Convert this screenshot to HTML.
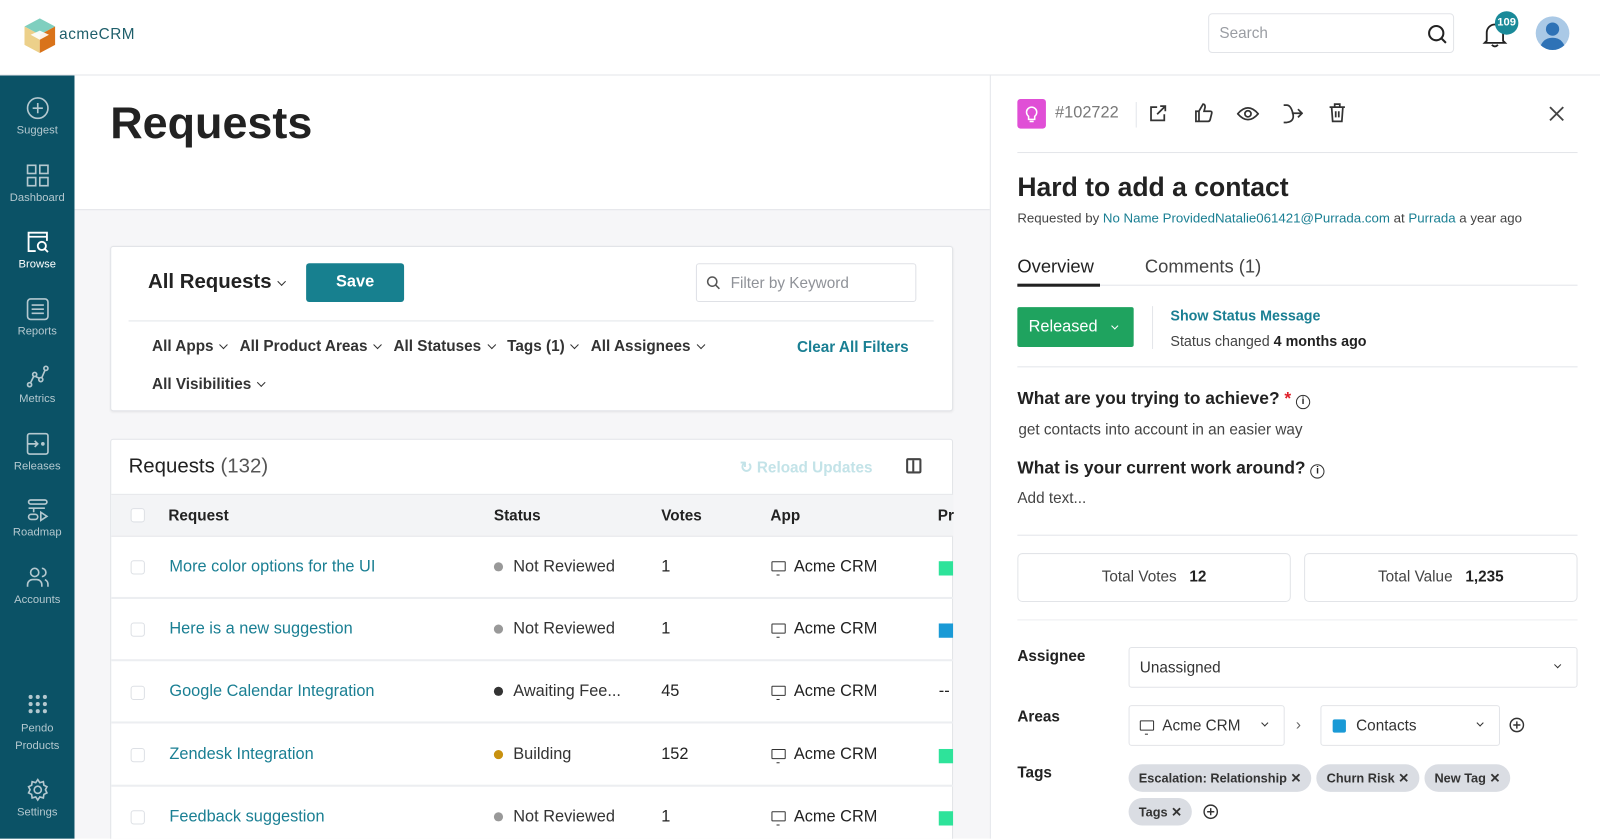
<!DOCTYPE html>
<html><head><meta charset="utf-8"><style>
*{box-sizing:border-box;margin:0;padding:0}
html,body{width:1600px;height:839px;overflow:hidden}
body{font-family:"Liberation Sans",sans-serif;color:#222;background:#fff;position:relative}
#w{position:absolute;left:0;top:0;width:1568px;height:822px;overflow:hidden;transform:scale(1.02041);transform-origin:0 0}
.a{position:absolute}
.side{left:0;top:74px;width:73px;height:748px;background:#0b5266}
.nav{position:absolute;left:0;width:73px;text-align:center;color:#b4c8cf;font-size:11px}
.nav svg{display:block;margin:0 auto 4px}
.link{color:#1a7f93}
.chev{display:inline-block;width:6px;height:6px;border-right:1.5px solid #333;border-bottom:1.5px solid #333;transform:rotate(45deg);margin-left:7px;position:relative;top:-3px}
.cb{position:absolute;left:128px;width:14px;height:14px;border:1.5px solid #dde0e5;border-radius:3px;background:#fff}
.row{position:absolute;left:109px;width:825px;height:61px;border-bottom:2px solid #eceef1;font-size:16px}
.row span{position:absolute;top:21px}
.dot{display:inline-block;width:9px;height:9px;border-radius:50%;margin-right:10px}
.tag{display:inline-block;background:#dadde3;border-radius:14px;padding:6px 10px;font-size:12.5px;font-weight:bold;color:#333;margin-right:5px}
.mon{display:inline-block;width:14px;height:10px;border:1.5px solid #333;border-radius:1px;margin-right:8px;position:relative;top:0}
.mon:after{content:"";position:absolute;left:4px;top:9px;width:3px;height:3px;border-bottom:1.5px solid #333}
</style></head><body><div id="w">
<div class="a" style="left:0;top:0;width:1568px;height:74px;border-bottom:1px solid #e3e5ea"></div>
<svg class="a" style="left:22px;top:17px" width="34" height="36" viewBox="0 0 34 36"><polygon points="17,1 32,9 17,17 2,9" fill="#7fcfbf"/><polygon points="2,9 17,17 17,35 2,27" fill="#ecd08a"/><polygon points="17,17 32,9 32,27 17,35" fill="#d9731a"/><polygon points="17,13 26,17 17,22 8,17" fill="#fff" opacity=".9"/></svg>
<div class="a" style="left:58px;top:25px;font-size:15px;color:#1f5f6b;letter-spacing:.5px">acmeCRM</div>
<div class="a" style="left:1184px;top:13px;width:241px;height:39px;border:1.5px solid #e2e4e8;border-radius:4px;font-size:15px;color:#9a9da3;padding:10px 0 0 10px">Search</div>
<svg class="a" style="left:1398px;top:23px" width="22" height="22" viewBox="0 0 22 22"><circle cx="9.5" cy="9.5" r="7" fill="none" stroke="#222" stroke-width="2"/><path d="M14.5 14.5L19 19" stroke="#222" stroke-width="2"/></svg>
<svg class="a" style="left:1452px;top:20px" width="26" height="28" viewBox="0 0 26 28"><path d="M5 20V12a8 8 0 0 1 16 0v8l2 2H3z" fill="none" stroke="#222" stroke-width="1.8"/><path d="M10 24q3 3 6 0" stroke="#222" stroke-width="1.8" fill="none"/></svg>
<div class="a" style="left:1465px;top:11px;width:23px;height:23px;border-radius:50%;background:#1a8a99;color:#fff;font-size:11px;font-weight:bold;text-align:center;line-height:23px">109</div>
<div class="a" style="left:1505px;top:16px;width:33px;height:33px;border-radius:50%;background:#aac9e6;overflow:hidden"><div class="a" style="left:10px;top:6px;width:13px;height:13px;border-radius:50%;background:#2e72b6"></div><div class="a" style="left:4px;top:21px;width:25px;height:12px;border-radius:12px 12px 0 0;background:#2e72b6"></div></div>

<div class="a side"></div>
<div class="nav" style="top:94px"><svg width="24" height="24" viewBox="0 0 24 24" fill="none" stroke="#b4c8cf" stroke-width="1.6"><circle cx="12" cy="12" r="10"/><path d="M12 7v10M7 12h10"/></svg>Suggest</div>
<div class="nav" style="top:160px"><svg width="24" height="24" viewBox="0 0 24 24" fill="none" stroke="#b4c8cf" stroke-width="1.6"><rect x="2" y="2" width="8" height="8"/><rect x="14" y="2" width="8" height="8"/><rect x="2" y="14" width="8" height="8"/><rect x="14" y="14" width="8" height="8"/></svg>Dashboard</div>
<div class="nav" style="top:225px;color:#fff"><svg width="24" height="24" viewBox="0 0 24 24" fill="none" stroke="#fff" stroke-width="1.8"><path d="M10 21H3V3h18v8"/><path d="M3 7h18"/><circle cx="16" cy="16" r="4"/><path d="M19 19l3 3"/></svg>Browse</div>
<div class="nav" style="top:291px"><svg width="24" height="24" viewBox="0 0 24 24" fill="none" stroke="#b4c8cf" stroke-width="1.6"><rect x="2" y="2" width="20" height="20" rx="3"/><path d="M6 8h12M6 12h12M6 16h12"/></svg>Reports</div>
<div class="nav" style="top:357px"><svg width="24" height="24" viewBox="0 0 24 24" fill="none" stroke="#b4c8cf" stroke-width="1.6"><circle cx="4" cy="20" r="2"/><circle cx="9" cy="10" r="2"/><circle cx="15" cy="15" r="2"/><circle cx="20" cy="4" r="2"/><path d="M5 18l3-6M10 12l4 2M16 13l3-7"/></svg>Metrics</div>
<div class="nav" style="top:423px"><svg width="24" height="24" viewBox="0 0 24 24" fill="none" stroke="#b4c8cf" stroke-width="1.6"><rect x="2" y="2" width="20" height="20" rx="2"/><path d="M2 12h10M9 9l3 3-3 3"/><circle cx="17" cy="12" r="1" fill="#b4c8cf"/></svg>Releases</div>
<div class="nav" style="top:488px"><svg width="24" height="24" viewBox="0 0 24 24" fill="none" stroke="#b4c8cf" stroke-width="1.6"><rect x="3" y="2" width="18" height="4" rx="2"/><path d="M3 10h16M8 10v4"/><rect x="3" y="16" width="9" height="5" rx="2.5"/><path d="M15 14l6 4-6 4z"/></svg>Roadmap</div>
<div class="nav" style="top:554px"><svg width="24" height="24" viewBox="0 0 24 24" fill="none" stroke="#b4c8cf" stroke-width="1.6"><circle cx="9" cy="7" r="4"/><path d="M2 21v-2a5 5 0 0 1 5-5h4a5 5 0 0 1 5 5v2"/><path d="M16 3a4 4 0 0 1 0 8M19 14a5 5 0 0 1 3 5v2"/></svg>Accounts</div>
<div class="nav" style="top:678px;line-height:17px"><svg width="24" height="24" viewBox="0 0 24 24" fill="#b4c8cf"><circle cx="5" cy="5" r="2"/><circle cx="12" cy="5" r="2"/><circle cx="19" cy="5" r="2"/><circle cx="5" cy="12" r="2"/><circle cx="12" cy="12" r="2"/><circle cx="19" cy="12" r="2"/><circle cx="5" cy="19" r="2"/><circle cx="12" cy="19" r="2"/><circle cx="19" cy="19" r="2"/></svg>Pendo<br>Products</div>
<div class="nav" style="top:762px"><svg width="24" height="24" viewBox="0 0 24 24" fill="none" stroke="#b4c8cf" stroke-width="1.6"><circle cx="12" cy="12" r="3.5"/><path d="M12 2l2 3 3.5-1 .5 3.5 3 1.5-1.5 3 1.5 3-3 1.5-.5 3.5-3.5-1-2 3-2-3-3.5 1-.5-3.5-3-1.5 1.5-3-1.5-3 3-1.5.5-3.5 3.5 1z"/></svg>Settings</div>

<div class="a" style="left:73px;top:205px;width:897px;height:617px;background:#f6f6f8;border-top:1.5px solid #e3e5ea"></div>
<div class="a" style="left:108px;top:96px;font-size:44px;font-weight:bold;color:#222">Requests</div>
<div class="a" style="left:970px;top:74px;width:1px;height:748px;background:#e3e5ea"></div>

<div class="a" style="left:108px;top:241px;width:826px;height:162px;background:#fff;border:1.5px solid #e2e4e8;border-radius:3px;box-shadow:0 1px 2px rgba(0,0,0,.06)"></div>
<div class="a" style="left:145px;top:265px;font-size:20px;font-weight:bold;color:#222">All Requests<span class="chev"></span></div>
<div class="a" style="left:300px;top:258px;width:96px;height:38px;background:#17808f;border-radius:3px;color:#fff;font-size:16px;font-weight:bold;text-align:center;line-height:38px">Save</div>
<div class="a" style="left:682px;top:258px;width:216px;height:38px;border:1.5px solid #dfe1e6;border-radius:3px;font-size:15px;color:#8f9298;padding:10px 0 0 33px">Filter by Keyword</div>
<svg class="a" style="left:692px;top:270px" width="14" height="14" viewBox="0 0 14 14"><circle cx="6" cy="6" r="4.5" fill="none" stroke="#555" stroke-width="1.5"/><path d="M9.5 9.5L13 13" stroke="#555" stroke-width="1.5"/></svg>
<div class="a" style="left:126px;top:314px;width:789px;height:1px;background:#e3e5ea"></div>
<div class="a" style="left:149px;top:331px;font-size:15px;font-weight:bold;color:#333"><span>All Apps<span class="chev"></span></span>&nbsp;&nbsp;&nbsp;<span>All Product Areas<span class="chev"></span></span>&nbsp;&nbsp;&nbsp;<span>All Statuses<span class="chev"></span></span>&nbsp;&nbsp;&nbsp;<span>Tags (1)<span class="chev"></span></span>&nbsp;&nbsp;&nbsp;<span>All Assignees<span class="chev"></span></span></div>
<div class="a link" style="left:781px;top:332px;font-size:15px;font-weight:bold">Clear All Filters</div>
<div class="a" style="left:149px;top:368px;font-size:15px;font-weight:bold;color:#333">All Visibilities<span class="chev"></span></div>

<div class="a" style="left:108px;top:430px;width:826px;height:400px;background:#fff;border:1.5px solid #e2e4e8;border-radius:3px"></div>
<div class="a" style="left:126px;top:446px;font-size:20px;color:#222">Requests <span style="color:#555">(132)</span></div>
<div class="a" style="left:725px;top:449px;font-size:15px;font-weight:bold;color:#c3e3e8">&#x21bb; Reload Updates</div>
<div class="a" style="left:888px;top:449px;width:15px;height:15px;border:2px solid #444;border-radius:2px"><div class="a" style="left:4px;top:0;width:2px;height:11px;background:#444"></div></div>
<div class="a" style="left:109px;top:484px;width:825px;height:42px;background:#f3f4f6;border-top:1.5px solid #e6e8eb;border-bottom:1.5px solid #e6e8eb;font-size:15px;font-weight:bold;color:#222">
<span class="a" style="left:56px;top:12px">Request</span><span class="a" style="left:375px;top:12px">Status</span><span class="a" style="left:539px;top:12px">Votes</span><span class="a" style="left:646px;top:12px">App</span><span class="a" style="left:810px;top:12px">Pr</span></div>
<div class="cb" style="top:498px"></div>

<div class="row" style="top:526px"><span class="link" style="left:57px">More color options for the UI</span><span style="left:375px;color:#333"><i class="dot" style="background:#999"></i>Not Reviewed</span><span style="left:539px">1</span><span style="left:647px"><i class="mon"></i>Acme CRM</span><span style="left:811px;width:14px;height:14px;background:#2ee39a;top:24px"></span></div>
<div class="row" style="top:587px"><span class="link" style="left:57px">Here is a new suggestion</span><span style="left:375px;color:#333"><i class="dot" style="background:#999"></i>Not Reviewed</span><span style="left:539px">1</span><span style="left:647px"><i class="mon"></i>Acme CRM</span><span style="left:811px;width:14px;height:14px;background:#1a9ad6;top:24px"></span></div>
<div class="row" style="top:648px"><span class="link" style="left:57px">Google Calendar Integration</span><span style="left:375px;color:#333"><i class="dot" style="background:#333"></i>Awaiting Fee...</span><span style="left:539px">45</span><span style="left:647px"><i class="mon"></i>Acme CRM</span><span style="left:811px">--</span></div>
<div class="row" style="top:710px"><span class="link" style="left:57px">Zendesk Integration</span><span style="left:375px;color:#333"><i class="dot" style="background:#c8910f"></i>Building</span><span style="left:539px">152</span><span style="left:647px"><i class="mon"></i>Acme CRM</span><span style="left:811px;width:14px;height:14px;background:#2ee39a;top:24px"></span></div>
<div class="row" style="top:771px"><span class="link" style="left:57px">Feedback suggestion</span><span style="left:375px;color:#333"><i class="dot" style="background:#999"></i>Not Reviewed</span><span style="left:539px">1</span><span style="left:647px"><i class="mon"></i>Acme CRM</span><span style="left:811px;width:14px;height:14px;background:#2ee39a;top:24px"></span></div>
<div class="cb" style="top:549px"></div><div class="cb" style="top:610px"></div><div class="cb" style="top:672px"></div><div class="cb" style="top:733px"></div><div class="cb" style="top:794px"></div>

<div class="a" style="left:997px;top:97px;width:28px;height:29px;background:#e04fd6;border-radius:3px"></div>
<svg class="a" style="left:1004px;top:103px" width="14" height="17" viewBox="0 0 14 17" fill="none" stroke="#fff" stroke-width="1.5"><path d="M4 11a5 5 0 1 1 6 0v3H4z"/><path d="M5 16h4"/></svg>
<div class="a" style="left:1034px;top:102px;font-size:16px;color:#777">#102722</div>
<div class="a" style="left:1113px;top:100px;width:1px;height:25px;background:#e3e5ea"></div>
<svg class="a" style="left:1126px;top:102px" width="18" height="18" viewBox="0 0 18 18" fill="none" stroke="#333" stroke-width="1.7"><path d="M8 3H2v13h13v-6"/><path d="M11 2h5v5M16 2l-8 8"/></svg>
<svg class="a" style="left:1170px;top:101px" width="19" height="19" viewBox="0 0 19 19" fill="none" stroke="#333" stroke-width="1.7"><path d="M2 8h3v10H2zM5 8l4-7q2 0 2 3l-1 4h6q2 0 1.5 2l-1.5 6q-.5 2-2 2H5"/></svg>
<svg class="a" style="left:1212px;top:104px" width="22" height="15" viewBox="0 0 22 15" fill="none" stroke="#333" stroke-width="1.7"><path d="M1 7.5Q11-4 21 7.5Q11 19 1 7.5z"/><circle cx="11" cy="7.5" r="3"/></svg>
<svg class="a" style="left:1257px;top:101px" width="20" height="20" viewBox="0 0 20 20" fill="none" stroke="#333" stroke-width="1.7"><path d="M1 2h3q4 0 6 8t-6 9H1"/><path d="M9 10h10M15 6l4 4-4 4"/></svg>
<svg class="a" style="left:1302px;top:101px" width="17" height="19" viewBox="0 0 17 19" fill="none" stroke="#333" stroke-width="1.7"><path d="M1 4h15M6 4V1h5v3M3 4l1 14h9l1-14M7 8v6M10 8v6"/></svg>
<svg class="a" style="left:1518px;top:104px" width="15" height="15" viewBox="0 0 15 15" stroke="#444" stroke-width="1.8"><path d="M1 1l13 13M14 1L1 14"/></svg>
<div class="a" style="left:997px;top:149px;width:549px;height:1px;background:#e3e5ea"></div>
<div class="a" style="left:997px;top:168px;font-size:26px;font-weight:bold;color:#222">Hard to add a contact</div>
<div class="a" style="left:997px;top:206px;font-size:13px;color:#444">Requested by <span class="link">No Name ProvidedNatalie061421@Purrada.com</span> at <span class="link">Purrada</span> a year ago</div>
<div class="a" style="left:997px;top:251px;font-size:18px;color:#222">Overview</div>
<div class="a" style="left:1122px;top:251px;font-size:18px;color:#444">Comments (1)</div>
<div class="a" style="left:997px;top:279px;width:549px;height:1px;background:#e3e5ea"></div>
<div class="a" style="left:997px;top:278px;width:81px;height:3px;background:#222"></div>
<div class="a" style="left:997px;top:301px;width:114px;height:39px;background:#1fa35f;border-radius:2px;color:#fff;font-size:16px;padding:11px 0 0 11px">Released<span class="chev" style="border-color:#fff;margin-left:14px;width:5px;height:5px"></span></div>
<div class="a" style="left:1129px;top:300px;width:1px;height:42px;background:#e3e5ea"></div>
<div class="a link" style="left:1147px;top:301px;font-size:14px;font-weight:bold">Show Status Message</div>
<div class="a" style="left:1147px;top:326px;font-size:14px;color:#444">Status changed <b style="color:#222">4 months ago</b></div>
<div class="a" style="left:997px;top:359px;width:549px;height:1px;background:#e3e5ea"></div>
<div class="a" style="left:997px;top:381px;font-size:17px;font-weight:bold;color:#222">What are you trying to achieve? <span style="color:#e0202a">*</span> <span style="border:1.5px solid #333;border-radius:50%;display:inline-block;width:14px;height:14px;text-align:center;line-height:11px;font-size:10px">i</span></div>
<div class="a" style="left:998px;top:413px;font-size:15px;color:#444">get contacts into account in an easier way</div>
<div class="a" style="left:997px;top:449px;font-size:17px;font-weight:bold;color:#222">What is your current work around? <span style="border:1.5px solid #333;border-radius:50%;display:inline-block;width:14px;height:14px;text-align:center;line-height:11px;font-size:10px">i</span></div>
<div class="a" style="left:997px;top:480px;font-size:15px;color:#444">Add text...</div>
<div class="a" style="left:997px;top:524px;width:549px;height:1px;background:#e3e5ea"></div>
<div class="a" style="left:997px;top:542px;width:268px;height:48px;border:1.5px solid #e2e4e8;border-radius:5px;text-align:center;line-height:45px;font-size:15px;color:#444">Total Votes &nbsp;&nbsp;<b style="color:#222">12</b></div>
<div class="a" style="left:1278px;top:542px;width:268px;height:48px;border:1.5px solid #e2e4e8;border-radius:5px;text-align:center;line-height:45px;font-size:15px;color:#444">Total Value &nbsp;&nbsp;<b style="color:#222">1,235</b></div>
<div class="a" style="left:997px;top:607px;width:549px;height:1px;background:#eceef1"></div>
<div class="a" style="left:997px;top:635px;font-size:15px;font-weight:bold">Assignee</div>
<div class="a" style="left:997px;top:694px;font-size:15px;font-weight:bold">Areas</div>
<div class="a" style="left:997px;top:749px;font-size:15px;font-weight:bold">Tags</div>
<div class="a" style="left:1106px;top:634px;width:440px;height:40px;border:1.5px solid #e2e4e8;border-radius:3px;font-size:15px;color:#333;padding:11px 0 0 10px">Unassigned<span class="chev" style="position:absolute;right:16px;top:14px;width:5px;height:5px"></span></div>
<div class="a" style="left:1106px;top:691px;width:153px;height:40px;border:1.5px solid #e2e4e8;border-radius:3px;font-size:15px;color:#333;padding:11px 0 0 10px"><i class="mon"></i>Acme CRM<span class="chev" style="position:absolute;right:16px;top:14px;width:5px;height:5px"></span></div>
<div class="a" style="left:1270px;top:702px;font-size:15px;color:#666">›</div>
<div class="a" style="left:1294px;top:691px;width:176px;height:40px;border:1.5px solid #e2e4e8;border-radius:3px;font-size:15px;color:#333;padding:11px 0 0 34px">Contacts<span class="chev" style="position:absolute;right:16px;top:14px;width:5px;height:5px"></span><div class="a" style="left:11px;top:13px;width:13px;height:13px;background:#1a9ad6;border-radius:2px"></div></div>
<svg class="a" style="left:1479px;top:703px" width="15" height="15" viewBox="0 0 15 15" fill="none" stroke="#333" stroke-width="1.4"><circle cx="7.5" cy="7.5" r="6.5"/><path d="M7.5 4v7M4 7.5h7"/></svg>
<div class="a" style="left:1106px;top:749px;width:440px"><span class="tag">Escalation: Relationship &#x2715;</span><span class="tag">Churn Risk &#x2715;</span><span class="tag">New Tag &#x2715;</span></div>
<div class="a" style="left:1106px;top:782px"><span class="tag">Tags &#x2715;</span></div>
<svg class="a" style="left:1179px;top:788px" width="15" height="15" viewBox="0 0 15 15" fill="none" stroke="#333" stroke-width="1.4"><circle cx="7.5" cy="7.5" r="6.5"/><path d="M7.5 4v7M4 7.5h7"/></svg>
</div></body></html>
